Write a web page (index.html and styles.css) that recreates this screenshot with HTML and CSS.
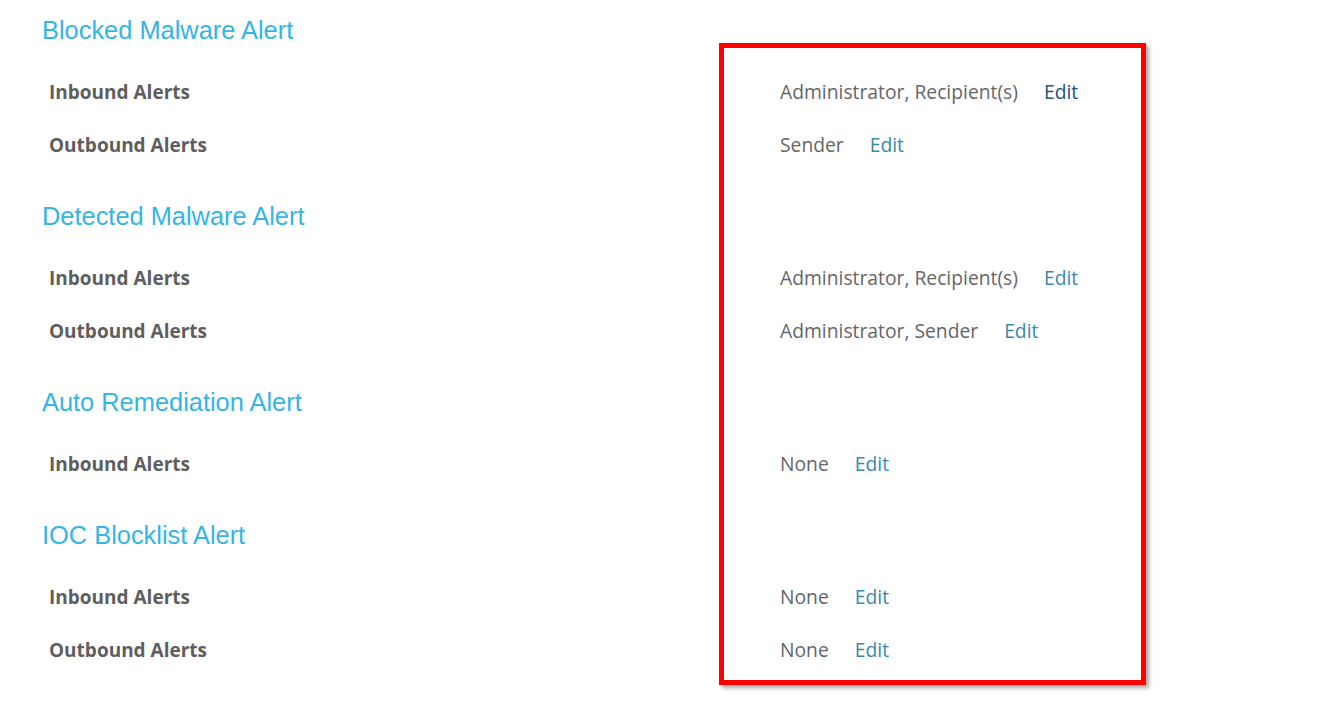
FILE: index.html
```html
<!DOCTYPE html>
<html>
<head>
<meta charset="utf-8">
<link rel="stylesheet" href="styles.css">
</head>
<body>
<main class="page">
  <section class="group">
    <h2 class="group-title">Blocked Malware Alert</h2>
    <div class="row"><span class="label">Inbound Alerts</span><span class="value"><span>Administrator, Recipient(s)</span><a class="edit edit-active">Edit</a></span></div>
    <div class="row"><span class="label">Outbound Alerts</span><span class="value"><span>Sender</span><a class="edit">Edit</a></span></div>
  </section>
  <section class="group">
    <h2 class="group-title">Detected Malware Alert</h2>
    <div class="row"><span class="label">Inbound Alerts</span><span class="value"><span>Administrator, Recipient(s)</span><a class="edit">Edit</a></span></div>
    <div class="row"><span class="label">Outbound Alerts</span><span class="value"><span>Administrator, Sender</span><a class="edit">Edit</a></span></div>
  </section>
  <section class="group">
    <h2 class="group-title">Auto Remediation Alert</h2>
    <div class="row"><span class="label">Inbound Alerts</span><span class="value"><span>None</span><a class="edit">Edit</a></span></div>
  </section>
  <section class="group">
    <h2 class="group-title">IOC Blocklist Alert</h2>
    <div class="row"><span class="label">Inbound Alerts</span><span class="value"><span>None</span><a class="edit">Edit</a></span></div>
    <div class="row"><span class="label">Outbound Alerts</span><span class="value"><span>None</span><a class="edit">Edit</a></span></div>
  </section>
  <div class="highlight"></div>
</main>
</body>
</html>
```

FILE: styles.css
```css
html, body {
  margin: 0;
  padding: 0;
  background: #ffffff;
}

.page {
  position: relative;
  padding: 15px 0 0 42px;
  font-family: "Open Sans", "Liberation Sans", sans-serif;
}

.group {
  margin: 0 0 30px 0;
}

.group-title {
  margin: 0 0 20px 0;
  height: 30px;
  line-height: 30px;
  font-family: "Liberation Sans", Arial, sans-serif;
  font-weight: normal;
  font-size: 25.4px;
  color: #35b4e6;
}

.row {
  display: grid;
  grid-template-columns: 731px auto;
  align-items: center;
  height: 53px;
  padding-left: 7px;
  font-size: 19.3px;
}

.label {
  font-weight: bold;
  font-size: 19px;
  color: #5e5e5e;
}

.value {
  display: flex;
  gap: 26px;
  color: #666666;
}

.edit {
  color: #3a89ad;
  cursor: pointer;
}

.edit-active {
  color: #22507e;
}

.highlight {
  position: absolute;
  left: 719px;
  top: 43px;
  width: 417px;
  height: 632px;
  border: 5px solid #ff0000;
  box-shadow: 3px 3px 4px rgba(0, 0, 0, 0.35);
  pointer-events: none;
}
```
